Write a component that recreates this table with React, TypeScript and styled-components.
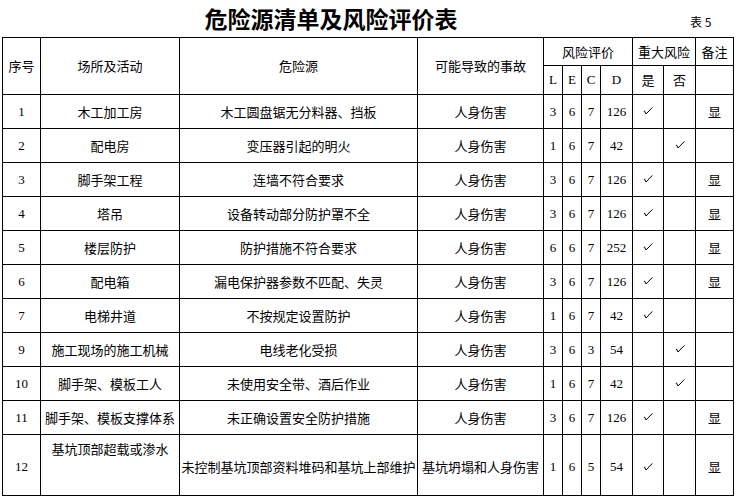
import styled, { createGlobalStyle } from 'styled-components';

const GlobalStyle = createGlobalStyle`
  html, body {
    margin: 0;
    padding: 0;
    background: #ffffff;
  }
  body {
    font-family: "Noto Sans CJK SC", "Liberation Sans", sans-serif;
    color: #000;
  }
`;

type Row = {
  no: string;
  place: string;
  hazard: string;
  accident: string;
  l: string;
  e: string;
  c: string;
  d: string;
  major: boolean;
  remark: string;
};

const rows: Row[] = [
  {no: '1', place: '木工加工房', hazard: '木工圆盘锯无分料器、挡板', accident: '人身伤害', l: '3', e: '6', c: '7', d: '126', major: true, remark: '显'},
  {no: '2', place: '配电房', hazard: '变压器引起的明火', accident: '人身伤害', l: '1', e: '6', c: '7', d: '42', major: false, remark: ''},
  {no: '3', place: '脚手架工程', hazard: '连墙不符合要求', accident: '人身伤害', l: '3', e: '6', c: '7', d: '126', major: true, remark: '显'},
  {no: '4', place: '塔吊', hazard: '设备转动部分防护罩不全', accident: '人身伤害', l: '3', e: '6', c: '7', d: '126', major: true, remark: '显'},
  {no: '5', place: '楼层防护', hazard: '防护措施不符合要求', accident: '人身伤害', l: '6', e: '6', c: '7', d: '252', major: true, remark: '显'},
  {no: '6', place: '配电箱', hazard: '漏电保护器参数不匹配、失灵', accident: '人身伤害', l: '3', e: '6', c: '7', d: '126', major: true, remark: '显'},
  {no: '7', place: '电梯井道', hazard: '不按规定设置防护', accident: '人身伤害', l: '1', e: '6', c: '7', d: '42', major: true, remark: ''},
  {no: '9', place: '施工现场的施工机械', hazard: '电线老化受损', accident: '人身伤害', l: '3', e: '6', c: '3', d: '54', major: false, remark: ''},
  {no: '10', place: '脚手架、模板工人', hazard: '未使用安全带、酒后作业', accident: '人身伤害', l: '1', e: '6', c: '7', d: '42', major: false, remark: ''},
  {no: '11', place: '脚手架、模板支撑体系', hazard: '未正确设置安全防护措施', accident: '人身伤害', l: '3', e: '6', c: '7', d: '126', major: true, remark: '显'},
];

const colWidths = [38, 139, 238, 126, 19, 19, 19, 32, 31, 32, 38];

// small slanted tick, no overbar, as in the printed form
function Tick() {
  return (
    <TickSvg viewBox="0 0 10 8" aria-label="√">
      <path d="M0.8 4.6 L1.6 4.1 L3 7 L9.4 0.4" />
    </TickSvg>
  );
}

function App() {
  return (
    <Page>
      <GlobalStyle />
      <TitleBar>
        <Title>危险源清单及风险评价表</Title>
        <TableNo>表 5</TableNo>
      </TitleBar>
      <Table>
        <colgroup>
          {colWidths.map((w, i) => (
            <col key={i} style={{width: w}} />
          ))}
        </colgroup>
        <thead>
          <HeadRow $h={28}>
            <Th rowSpan={2}>序号</Th>
            <Th rowSpan={2}>场所及活动</Th>
            <Th rowSpan={2}>危险源</Th>
            <Th rowSpan={2}>可能导致的事故</Th>
            <Th colSpan={4}>风险评价</Th>
            <Th colSpan={2}>重大风险</Th>
            <Th>备注</Th>
          </HeadRow>
          <HeadRow $h={29}>
            <Th $latin>L</Th>
            <Th $latin>E</Th>
            <Th $latin>C</Th>
            <Th $latin>D</Th>
            <Th>是</Th>
            <Th>否</Th>
            <Th />
          </HeadRow>
        </thead>
        <tbody>
          {rows.map(r => (
            <BodyRow key={r.no} $h={34}>
              <Td $latin>{r.no}</Td>
              <Td>{r.place}</Td>
              <Td>{r.hazard}</Td>
              <Td>{r.accident}</Td>
              <Td $latin>{r.l}</Td>
              <Td $latin>{r.e}</Td>
              <Td $latin>{r.c}</Td>
              <Td $latin>{r.d}</Td>
              <Td>{r.major && <Tick />}</Td>
              <Td>{!r.major && <Tick />}</Td>
              <Td>{r.remark}</Td>
            </BodyRow>
          ))}
          <BodyRow $h={61}>
            <Td $latin $shift>12</Td>
            <Td $top>基坑顶部超载或渗水</Td>
            <Td $shift>未控制基坑顶部资料堆码和基坑上部维护</Td>
            <Td $shift>基坑坍塌和人身伤害</Td>
            <Td $latin $shift>1</Td>
            <Td $latin $shift>6</Td>
            <Td $latin $shift>5</Td>
            <Td $latin $shift>54</Td>
            <Td $shift>
              <Tick />
            </Td>
            <Td />
            <Td $shift>显</Td>
          </BodyRow>
        </tbody>
      </Table>
    </Page>
  );
}

const Page = styled.div`
  width: 738px;
  height: 499px;
  padding-left: 2px;
  box-sizing: border-box;
  overflow: hidden;
`;

const TitleBar = styled.div`
  display: flex;
  align-items: center;
  height: 37px;
`;

const Title = styled.h1`
  width: 658px;
  margin: 0;
  text-align: center;
  font-family: "Noto Sans CJK SC", sans-serif;
  font-size: 23px;
  font-weight: 700;
  line-height: 1;
  letter-spacing: 0;
`;

const TableNo = styled.span`
  margin-left: 30px;
  margin-top: 6px;
  font-size: 12px;
`;

const Table = styled.table`
  width: 731px;
  table-layout: fixed;
  border-collapse: collapse;
  font-size: 13px;
`;

const HeadRow = styled.tr<{$h: number}>`
  height: ${p => p.$h}px;
`;

const BodyRow = styled.tr<{$h: number}>`
  height: ${p => p.$h}px;
`;

const Th = styled.th<{$latin?: boolean}>`
  border: 1px solid #000;
  padding: 0;
  font-weight: 400;
  text-align: center;
  vertical-align: middle;
  white-space: nowrap;
  font-family: ${p =>
    p.$latin ? '"Liberation Serif", serif' : '"Noto Sans CJK SC", sans-serif'};
  font-size: 13px;
  line-height: 1.2;
`;

const Td = styled.td<{$latin?: boolean; $top?: boolean; $shift?: boolean}>`
  border: 1px solid #000;
  padding: ${p => (p.$top ? '6px 0 0' : p.$shift ? '4px 0 0' : '0')};
  text-align: center;
  vertical-align: ${p => (p.$top ? 'top' : 'middle')};
  white-space: nowrap;
  overflow: hidden;
  font-family: ${p =>
    p.$latin ? '"Liberation Serif", serif' : '"Noto Sans CJK SC", sans-serif'};
  font-size: 13px;
  line-height: 1.2;
`;

const TickSvg = styled.svg`
  display: inline-block;
  width: 10px;
  height: 8px;
  vertical-align: middle;
  transform: translateY(-2px);

  path {
    fill: none;
    stroke: #000;
    stroke-width: 1;
  }
`;

export default App;
